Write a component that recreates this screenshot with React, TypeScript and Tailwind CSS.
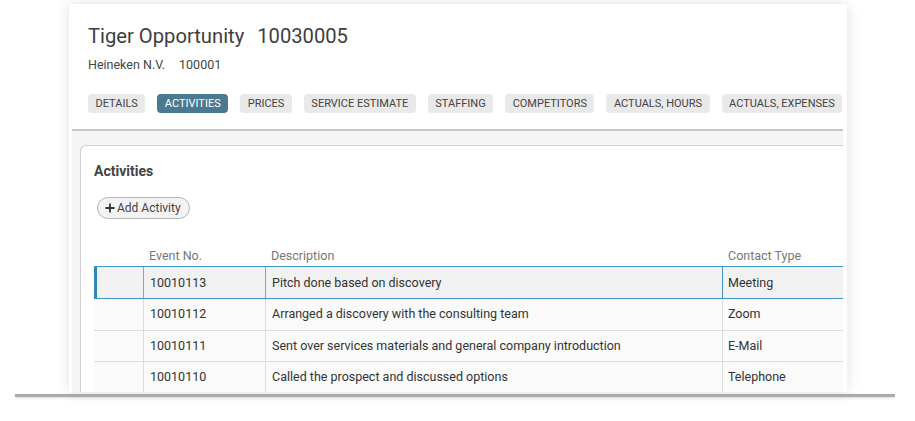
import React from "react";

const rows = [
  { no: "10010113", desc: "Pitch done based on discovery", type: "Meeting", sel: true },
  { no: "10010112", desc: "Arranged a discovery with the consulting team", type: "Zoom" },
  { no: "10010111", desc: "Sent over services materials and general company introduction", type: "E-Mail" },
  { no: "10010110", desc: "Called the prospect and discussed options", type: "Telephone" },
];

const tabs = [
  "DETAILS",
  "ACTIVITIES",
  "PRICES",
  "SERVICE ESTIMATE",
  "STAFFING",
  "COMPETITORS",
  "ACTUALS, HOURS",
  "ACTUALS, EXPENSES",
];

export default function App() {
  return (
    <div className="w-[915px] h-[421px] bg-white overflow-hidden font-['Roboto',sans-serif] text-[#333]">
      <div className="pl-[69px] pt-[4px]">
        <div className="w-[778px] h-[388px] bg-white rounded-t-[4px] shadow-[0_0_14px_rgba(0,0,0,0.13)] overflow-hidden flex flex-col">
          <div className="h-[125px] shrink-0 pl-[19px] pt-[20px]">
            <div className="text-[20.2px] leading-[24px] text-[#3e3e3e] flex">
              <span>Tiger Opportunity</span>
              <span className="ml-[13px]">10030005</span>
            </div>
            <div className="mt-[9px] text-[12.5px] leading-[16px] text-[#444] flex">
              <span>Heineken N.V.</span>
              <span className="ml-[14px]">100001</span>
            </div>
            <div className="mt-[21px] flex gap-[12px] whitespace-nowrap">
              {tabs.map((t) => (
                <div
                  key={t}
                  className={
                    t === "ACTIVITIES"
                      ? "shrink-0 h-[19px] px-[7.5px] rounded-[4px] bg-[#4a7a90] text-white text-[11px] leading-[19px]"
                      : "shrink-0 h-[19px] px-[7.5px] rounded-[4px] bg-[#e9e9e9] text-[#444] text-[11px] leading-[19px]"
                  }
                >
                  {t}
                </div>
              ))}
            </div>
          </div>
          <div className="flex-1 ml-[3px] mr-[4px] bg-[#f5f5f5] border-t-2 border-[#c6c6c6] pt-[14px] pl-[8px] overflow-hidden">
            <div className="w-[900px] h-full bg-white border-l border-t border-[#cfcfcf] rounded-tl-[6px] pt-[15px] pl-[13px]">
              <div className="text-[14px] leading-[20px] font-bold text-[#444]">Activities</div>
              <div className="mt-[16px] ml-[3px] w-[93px] h-[22px] rounded-full border border-[#b5b5b5] bg-[#f3f3f3] flex items-center pl-[7px] text-[12px] text-[#444] whitespace-nowrap">
                <svg width="10" height="10" viewBox="0 0 10 10" className="mr-[2px] shrink-0">
                  <path d="M5 0.5V9.5M0.5 5H9.5" stroke="#333" strokeWidth="1.8" />
                </svg>
                <span>Add Activity</span>
              </div>
              <div className="mt-[27px] flex h-[20px] items-center text-[12.5px] text-[#777] whitespace-nowrap">
                <div className="w-[49px] shrink-0" />
                <div className="w-[122px] shrink-0 pl-[6px]">Event No.</div>
                <div className="w-[457px] shrink-0 pl-[6px]">Description</div>
                <div className="w-[200px] shrink-0 pl-[6px]">Contact Type</div>
              </div>
              <div className="flex flex-col">
                {rows.map((r) => (
                  <div
                    key={r.no}
                    className={
                      r.sel
                        ? "flex h-[33px] bg-[#f1f1f1] border-t border-b border-[#3f95c6] text-[12.5px] text-[#333] whitespace-nowrap"
                        : "flex h-[31.5px] bg-[#fafafa] border-b border-[#dcdcdc] text-[12.5px] text-[#333] whitespace-nowrap"
                    }
                  >
                    <div
                      className={
                        r.sel
                          ? "w-[49px] shrink-0 border-l-[3px] border-[#2d87bd]"
                          : "w-[49px] shrink-0"
                      }
                    />
                    <div
                      className={
                        r.sel
                          ? "w-[122px] shrink-0 border-l border-[#74acd0] pl-[6px] pt-[1px] flex items-center"
                          : "w-[122px] shrink-0 border-l border-[#dcdcdc] pl-[6px] pt-[1px] flex items-center"
                      }
                    >
                      {r.no}
                    </div>
                    <div
                      className={
                        r.sel
                          ? "w-[457px] shrink-0 border-l border-[#74acd0] pl-[6px] pt-[1px] flex items-center"
                          : "w-[457px] shrink-0 border-l border-[#dcdcdc] pl-[6px] pt-[1px] flex items-center"
                      }
                    >
                      {r.desc}
                    </div>
                    <div
                      className={
                        r.sel
                          ? "w-[200px] shrink-0 border-l border-[#3f95c6] pl-[5px] pt-[1px] flex items-center"
                          : "w-[200px] shrink-0 border-l border-[#dcdcdc] pl-[5px] pt-[1px] flex items-center"
                      }
                    >
                      {r.type}
                    </div>
                  </div>
                ))}
              </div>
            </div>
          </div>
        </div>
      </div>
      <div className="ml-[15px] mt-[2px] w-[880px] h-[3px] bg-[#a9aba9] shadow-[0_1px_3px_rgba(0,0,0,0.15)]" />
    </div>
  );
}
